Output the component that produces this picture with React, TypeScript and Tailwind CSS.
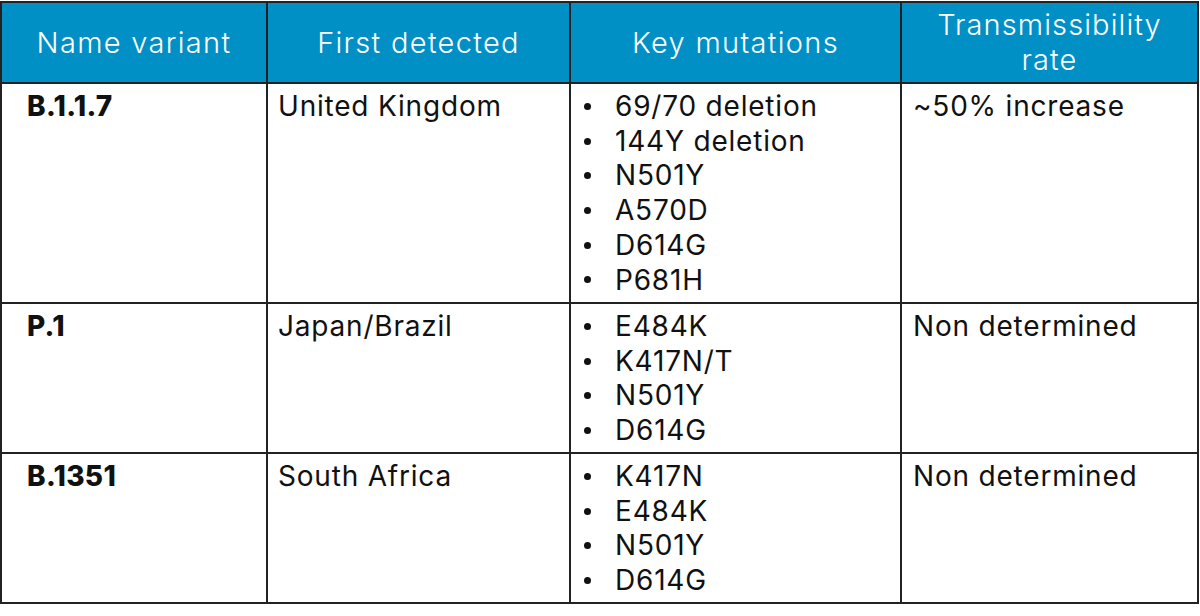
const rows = [
  {
    name: 'B.1.1.7',
    place: 'United Kingdom',
    mutations: ['69/70 deletion', '144Y deletion', 'N501Y', 'A570D', 'D614G', 'P681H'],
    rate: '~50% increase',
    height: 'h-[218px]',
  },
  {
    name: 'P.1',
    place: 'Japan/Brazil',
    mutations: ['E484K', 'K417N/T', 'N501Y', 'D614G'],
    rate: 'Non determined',
    height: 'h-[148px]',
  },
  {
    name: 'B.1351',
    place: 'South Africa',
    mutations: ['K417N', 'E484K', 'N501Y', 'D614G'],
    rate: 'Non determined',
    height: 'h-[148px]',
  },
]

const headers = ['Name variant', 'First detected', 'Key mutations']

const App = () => {
  return (
    <div className="w-[1200px] h-[616px] bg-white pt-[1px] font-['Inter',sans-serif] text-[#111] text-[28px] leading-[34.7px] tracking-[0.8px]">
      <div className="w-[1199px] grid grid-cols-[264px_301px_329px_295px] gap-[2px] border-2 border-[#222] bg-[#222]">
        {headers.map((h) => (
          <div
            key={h}
            className="h-[79px] bg-[#0190c6] text-white text-[29px] leading-[35px] tracking-[1.3px] font-light text-center pt-[22px]"
          >
            {h}
          </div>
        ))}
        <div className="h-[79px] bg-[#0190c6] text-white text-[29px] leading-[35px] tracking-[1.1px] font-light text-center pt-[4px]">
          <div>Transmissibility</div>
          <div>rate</div>
        </div>

        {rows.map((row) => (
          <div key={row.name} className="contents">
            <div className={`${row.height} bg-white pl-[25px] pt-[5px] font-extrabold tracking-[0.3px]`}>
              {row.name}
            </div>
            <div className="bg-white pl-[10px] pt-[5px]">{row.place}</div>
            <div className="bg-white pl-[13px] pt-[5px] flex flex-col">
              {row.mutations.map((m) => (
                <div key={m} className="flex items-center">
                  <span className="w-[7px] h-[7px] rounded-full bg-[#111] mr-[24px]" />
                  <span>{m}</span>
                </div>
              ))}
            </div>
            <div className="bg-white pl-[11px] pt-[5px]">{row.rate}</div>
          </div>
        ))}
      </div>
    </div>
  )
}

export default App
